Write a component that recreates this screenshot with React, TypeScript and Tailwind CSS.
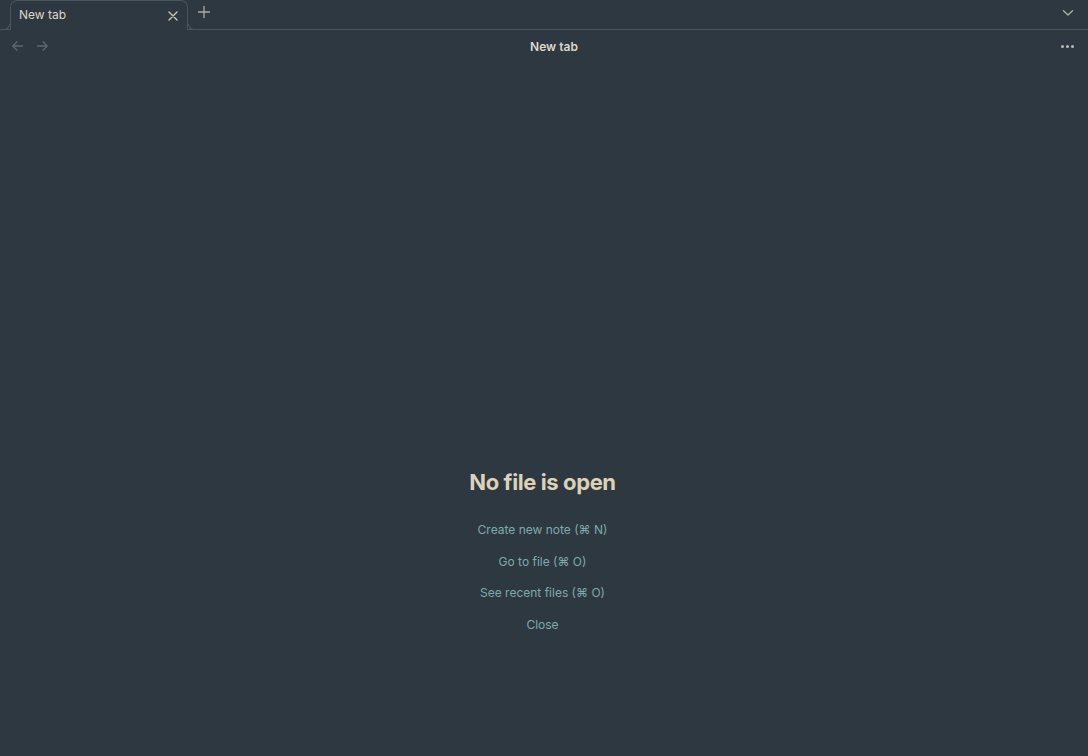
import React from "react";

export default function App() {
  return (
    <div
      className="w-[1088px] h-[756px] bg-[#2e3840] flex flex-col overflow-hidden"
      style={{ fontFamily: "Inter, 'Noto Sans', sans-serif" }}
    >
      {/* Tab bar */}
      <div className="h-[30px] flex items-end border-b border-[#4a545b] relative shrink-0">
        <div className="ml-[10px] w-[178px] h-[30px] -mb-px relative bg-[#2e3840] border border-b-0 border-[#4a545b] rounded-t-[7px] flex items-center pl-[8px] pr-[8px]">
          <span className="absolute -left-[7px] bottom-0 w-[6px] h-[6px] border-b border-r border-[#4a545b] rounded-br-[6px]" />
          <span className="absolute -right-[7px] bottom-0 w-[6px] h-[6px] border-b border-l border-[#4a545b] rounded-bl-[6px]" />
          <span className="text-[12px] text-[#dcd7c9] flex-1 -mt-[1px]">New tab</span>
          <svg width="12" height="12" viewBox="0 0 12 12" className="text-[#c9c6bd]">
            <path d="M2 2 L10 10 M10 2 L2 10" stroke="currentColor" strokeWidth="1.4" strokeLinecap="round" />
          </svg>
        </div>
        <div className="ml-[9px] mb-[10px] text-[#a9aca8]">
          <svg width="14" height="14" viewBox="0 0 14 14">
            <path d="M7 1.5 V12.5 M1.5 7 H12.5" stroke="currentColor" strokeWidth="1.3" strokeLinecap="round" />
          </svg>
        </div>
        <div className="flex-1" />
        <div className="mr-[14px] mb-[12px] text-[#a9aca8]">
          <svg width="12" height="8" viewBox="0 0 12 8">
            <path d="M1.5 1.8 L6 6 L10.5 1.8" stroke="currentColor" strokeWidth="1.4" fill="none" strokeLinecap="round" strokeLinejoin="round" />
          </svg>
        </div>
      </div>

      {/* Header */}
      <div className="h-[32px] flex items-center relative shrink-0">
        <div className="flex items-center gap-[12px] pl-[11px] text-[#5d676d]">
          <svg width="13" height="12" viewBox="0 0 13 12">
            <path d="M11.5 6 H1.8 M6 1.8 L1.8 6 L6 10.2" stroke="currentColor" strokeWidth="1.3" fill="none" strokeLinecap="round" strokeLinejoin="round" />
          </svg>
          <svg width="13" height="12" viewBox="0 0 13 12">
            <path d="M1.5 6 H11.2 M7 1.8 L11.2 6 L7 10.2" stroke="currentColor" strokeWidth="1.3" fill="none" strokeLinecap="round" strokeLinejoin="round" />
          </svg>
        </div>
        <div className="flex-1 text-center text-[12px] font-semibold text-[#dcd7c9] pl-[0px] pr-[2px] mt-[2px]">New tab</div>
        <div className="pr-[14px] flex items-center gap-[2px]">
          <span className="w-[3px] h-[3px] rounded-full bg-[#b9bab6]" />
          <span className="w-[3px] h-[3px] rounded-full bg-[#b9bab6]" />
          <span className="w-[3px] h-[3px] rounded-full bg-[#b9bab6]" />
        </div>
      </div>

      {/* Empty state */}
      <div className="flex-1 flex flex-col items-center pt-[404px] pr-[3px]">
        <div className="text-[22px] font-bold text-[#dcd2b9] leading-[32px] tracking-[-0.4px]">No file is open</div>
        <div className="mt-[21px] flex flex-col items-center gap-[10.7px] text-[12px] text-[#7eaaad]">
          <span className="leading-[21px]">Create new note (⌘ N)</span>
          <span className="leading-[21px]">Go to file (⌘ O)</span>
          <span className="leading-[21px]">See recent files (⌘ O)</span>
          <span className="leading-[21px]">Close</span>
        </div>
      </div>
    </div>
  );
}
